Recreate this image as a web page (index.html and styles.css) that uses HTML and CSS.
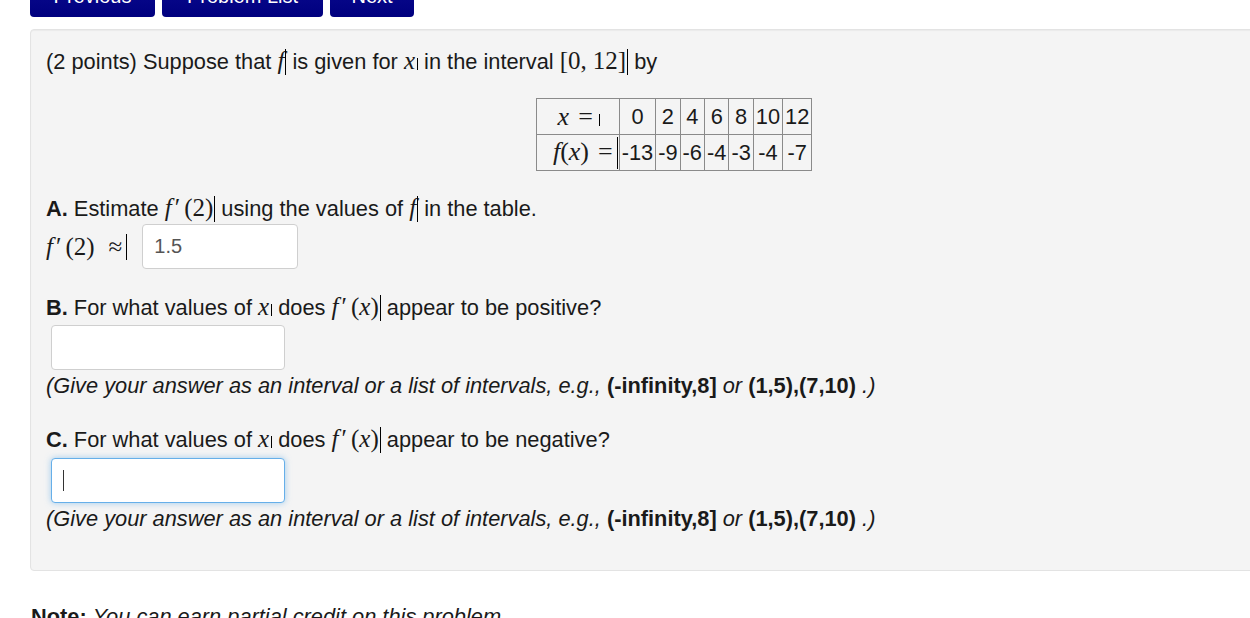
FILE: index.html
```html
<!DOCTYPE html>
<html>
<head>
<meta charset="utf-8">
<link rel="stylesheet" href="styles.css">
</head>
<body>
<nav class="nav">
  <a class="btn btn-prev">Previous</a>
  <a class="btn btn-list">Problem List</a>
  <a class="btn btn-next">Next</a>
</nav>
<section class="panel">
  <p class="line intro">(2 points) Suppose that <span class="m">f</span><span class="bar"></span> is given for <span class="m">x</span><span class="bar short"></span> in the interval <span class="mu">[0,<span class="sp"></span>12]</span><span class="bar"></span> by</p>
  <table class="data">
    <tr><td class="head"><span class="m">x</span><span class="mu rel">=</span><span class="bar short"></span></td><td>0</td><td>2</td><td>4</td><td>6</td><td>8</td><td>10</td><td>12</td></tr>
    <tr><td class="head"><span class="m">f</span><span class="mu">(</span><span class="m">x</span><span class="mu">)</span><span class="mu rel">=</span><span class="bar tall"></span></td><td>-13</td><td>-9</td><td>-6</td><td>-4</td><td>-3</td><td>-4</td><td>-7</td></tr>
  </table>
  <p class="line qa"><b>A.</b> Estimate <span class="m">f</span><span class="mu pr">&#8242;</span><span class="mu">(2)</span><span class="bar"></span> using the values of <span class="m">f</span><span class="bar"></span> in the table.</p>
  <div class="ansrow">
    <span class="m">f</span><span class="mu pr">&#8242;</span><span class="mu">(2)</span><span class="mu rel">&#8776;</span><span class="bar"></span>
    <span class="input input-a">1.5</span>
  </div>
  <p class="line qb"><b>B.</b> For what values of <span class="m">x</span><span class="bar short"></span> does <span class="m">f</span><span class="mu pr">&#8242;</span><span class="mu">(</span><span class="m">x</span><span class="mu">)</span><span class="bar"></span> appear to be positive?</p>
  <span class="input input-wide ib"></span>
  <p class="line hint"><i>(Give your answer as an interval or a list of intervals, e.g., <b>(-infinity,8]</b> or <b>(1,5),(7,10)</b> .)</i></p>
  <p class="line qc"><b>C.</b> For what values of <span class="m">x</span><span class="bar short"></span> does <span class="m">f</span><span class="mu pr">&#8242;</span><span class="mu">(</span><span class="m">x</span><span class="mu">)</span><span class="bar"></span> appear to be negative?</p>
  <span class="input input-wide ic focus"><span class="caret"></span></span>
  <p class="line hint hint2"><i>(Give your answer as an interval or a list of intervals, e.g., <b>(-infinity,8]</b> or <b>(1,5),(7,10)</b> .)</i></p>
</section>
<p class="note"><b>Note:</b> <i>You can earn partial credit on this problem.</i></p>
</body>
</html>
```
FILE: styles.css
```css
html, body {
  margin: 0;
  padding: 0;
  overflow: hidden;
  background: #fff;
  font-family: "Liberation Sans", Arial, sans-serif;
  color: #1a1a1a;
}

.nav {
  display: flex;
  gap: 7px;
  padding-left: 30px;
  margin-top: -17px;
  height: 34px;
}
.btn {
  display: block;
  height: 34px;
  border-radius: 4px;
  background: linear-gradient(#0a0a90, #00007e);
  color: #fff;
  font-size: 20px;
  line-height: 26px;
  text-align: center;
}
.btn-prev { width: 125px; }
.btn-list { width: 161px; }
.btn-next { width: 84px; }

.panel {
  margin: 12px 0 0 30px;
  width: 1256px;
  padding: 17px 16px 37px 15px;
  background: #f4f4f4;
  border: 1px solid #e3e3e3;
  border-radius: 4px;
  box-shadow: inset 0 1px 1px rgba(0,0,0,0.04);
  font-size: 21.8px;
}

.line {
  margin: 0;
  line-height: 28px;
  white-space: nowrap;
}

.m {
  font-family: "Liberation Serif", "DejaVu Serif", serif;
  font-style: italic;
  font-size: 25px;
}
.mu {
  font-family: "Liberation Serif", "DejaVu Serif", serif;
  font-size: 25px;
}
.mu.pr {
  margin-left: 3px;
  margin-right: 4px;
}
.mu.rel {
  margin: 0 6px;
}
.sp {
  display: inline-block;
  width: 6px;
}
.bar {
  display: inline-block;
  width: 1px;
  height: 26px;
  background: #000;
  vertical-align: -6px;
  margin-left: 1px;
}
.bar.short {
  height: 12px;
  vertical-align: -1px;
  margin-left: 2px;
}
.bar.tall {
  height: 32px;
  vertical-align: -9px;
  margin-left: 0;
}

.data {
  border-collapse: collapse;
  margin: 22px auto 0;
  font-size: 21.8px;
}
.data td {
  border: 1px solid #8a8a8a;
  padding: 0 2px;
  text-align: center;
  height: 35px;
}
.data td.head {
  width: 78px;
  padding: 0 1px 0 3px;
  white-space: nowrap;
  text-align: right;
}
.data td.head .m,
.data td.head .mu { font-size: 26px; }
.data td.head .mu.rel { margin: 0 4px 0 9px; }
.data tr:first-child td.head { text-align: center; }

.qa { margin-top: 23px; }

.ansrow {
  display: flex;
  align-items: center;
  margin-top: 1px;
  height: 45px;
}
.ansrow .mu.rel { margin: 0 3px 0 14px; }
.ansrow .bar { margin-right: 15px; }

.input {
  display: block;
  box-sizing: border-box;
  height: 45px;
  background: #fff;
  border: 1px solid #cfcfcf;
  border-radius: 4px;
  font-size: 20px;
  color: #555;
  line-height: 43px;
  padding-left: 11px;
}
.input-a {
  width: 156px;
}
.input-wide {
  width: 234px;
  margin-left: 5px;
}
.input-wide.focus {
  border-color: #66afe9;
  box-shadow: 0 0 6px rgba(102,175,233,0.6);
}
.caret {
  display: inline-block;
  width: 1px;
  height: 21px;
  background: #333;
  vertical-align: -4px;
}

i b { font-style: normal; }

.qb { margin-top: 24px; }
.ib { margin-top: 3px; }
.hint { margin-top: 2px; }
.qc { margin-top: 25px; }
.ic { margin-top: 4px; }
.hint2 { margin-top: 2px; }

.note {
  margin: 32px 0 0 31px;
  font-size: 21.8px;
  line-height: 28px;
}
```
